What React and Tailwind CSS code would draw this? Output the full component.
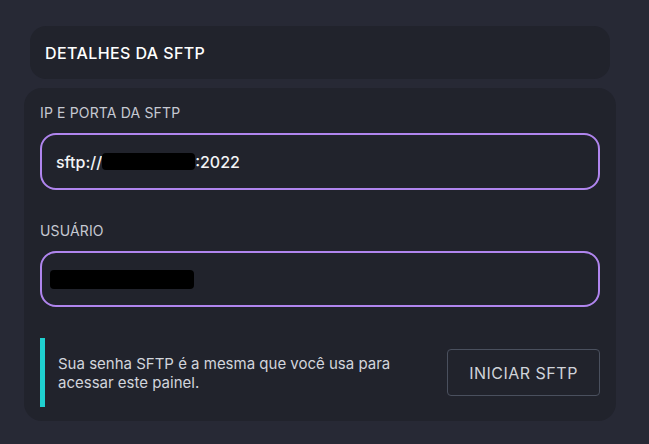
export default function App() {
    return (
        <div className="min-h-screen w-full bg-[#272935] px-6 pt-[26px] font-['Inter',sans-serif]">
            <div className="ml-[6px] flex h-[53px] w-[580px] items-center rounded-2xl bg-[#21232c] px-[15px]">
                <h2 className="text-base font-medium tracking-[0.4px] text-white">DETALHES DA SFTP</h2>
            </div>

            <div className="mt-[9px] w-[592px] rounded-[18px] bg-[#21232c] px-4 pt-[15px] pb-[14px]">
                <label className="block text-sm leading-5 tracking-[0.15px] text-[#c6c9d2]">IP E PORTA DA SFTP</label>
                <div className="mt-[10px] flex h-[57px] items-center rounded-2xl border-2 border-[#b085ee] px-[14px]">
                    <span className="text-base font-medium text-[#f3f4f6]">sftp://</span>
                    <span className="inline-block h-[17px] w-[93px] rounded-sm bg-black"></span>
                    <span className="text-base font-medium text-[#f3f4f6]">:2022</span>
                </div>

                <label className="mt-[31px] block text-sm leading-5 tracking-[0.15px] text-[#c6c9d2]">USUÁRIO</label>
                <div className="mt-[10px] flex h-[56px] items-center rounded-2xl border-2 border-[#b085ee] px-2">
                    <span className="inline-block h-[19px] w-[144px] rounded-sm bg-black"></span>
                </div>

                <div className="mt-[31px] flex items-center justify-between">
                    <div className="flex h-[69px] items-center border-l-[5px] border-[#1fd0d0] pl-[13px]">
                        <p className="w-[345px] text-[15px] leading-[19px] text-[#d2d5dc]">
                            Sua senha SFTP é a mesma que você usa para acessar este painel.
                        </p>
                    </div>
                    <button className="h-[47px] w-[153px] rounded border border-[#4a505e] text-base tracking-[0.5px] text-[#d0d3da]">
                        INICIAR SFTP
                    </button>
                </div>
            </div>
        </div>
    );
}
